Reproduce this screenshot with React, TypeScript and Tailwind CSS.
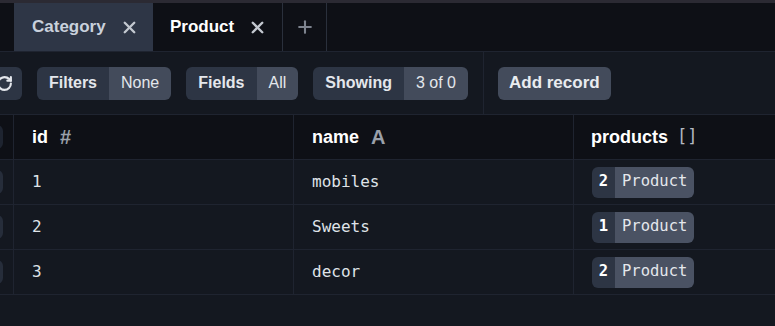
import React from 'react';
import { X, Plus, RotateCw } from 'lucide-react';

interface Row {
  id: number;
  name: string;
  count: number;
}

const rows: Row[] = [
  { id: 1, name: 'mobiles', count: 2 },
  { id: 2, name: 'Sweets', count: 1 },
  { id: 3, name: 'decor', count: 2 },
];

const sans = { fontFamily: '"Liberation Sans", Arial, sans-serif' };
const mono = { fontFamily: '"DejaVu Sans Mono", monospace' };

const ToolGroup: React.FC<{ label: string; value: string }> = ({ label, value }) => (
  <div className="flex h-[33px] overflow-hidden rounded-md text-[16px] text-[#e4e7ec]">
    <span className="flex items-center bg-[#2d3544] px-3 font-bold">{label}</span>
    <span className="flex items-center bg-[#434b5b] px-3">{value}</span>
  </div>
);

const Gutter: React.FC<{ header?: boolean }> = ({ header }) => (
  <div className="flex w-[14px] shrink-0 items-center border-r border-[#1f2430]">
    <div className={`-ml-[21px] h-6 w-6 rounded-md ${header ? 'bg-[#1e2430]' : 'bg-[#262d3a]'}`} />
  </div>
);

export default function App() {
  return (
    <div className="h-[326px] w-[775px] overflow-hidden bg-[#141820]" style={sans}>
      <div className="h-[3px] bg-[#2b2a33]" />

      <div className="flex h-[49px] border-b border-[#1f2430] bg-[#0e1016]">
        <div className="w-[14px]" />
        <div className="flex w-[139px] items-center gap-[14px] bg-[#2e3646] pl-[18px] text-[17px] font-bold text-[#c9d1dc]">
          Category
          <X className="h-[19px] w-[19px] text-[#c3c8d0]" strokeWidth={3} />
        </div>
        <div className="flex w-[129px] items-center gap-[14px] pl-[17px] text-[17px] font-bold text-white">
          Product
          <X className="h-[19px] w-[19px] text-[#c3c8d0]" strokeWidth={3} />
        </div>
        <div className="flex w-[45px] items-center justify-center border-x border-[#2a303c]">
          <Plus className="h-5 w-5 text-[#7d838e]" strokeWidth={2.5} />
        </div>
      </div>

      <div className="flex h-[63px] items-center border-b border-[#1f2430]">
        <div className="flex items-center gap-[15px]">
          <button className="-ml-[14px] flex h-[33px] w-[36px] items-center justify-center rounded-md bg-[#2d3544] text-[#e4e7ec]">
            <RotateCw className="h-[17px] w-[17px]" strokeWidth={3} />
          </button>
          <ToolGroup label="Filters" value="None" />
          <ToolGroup label="Fields" value="All" />
          <ToolGroup label="Showing" value="3 of 0" />
        </div>
        <div className="ml-[15px] flex h-full items-center border-l border-[#1f2430] pl-[14px]">
          <button className="h-[33px] rounded-md bg-[#434b5b] px-[11px] text-[17px] font-bold text-[#e9ecf0]">
            Add record
          </button>
        </div>
      </div>

      <div className="flex h-[45px] border-b border-[#1f2430] bg-[#0e1016] text-[18px] font-bold text-white">
        <Gutter header />
        <div className="flex w-[280px] items-center gap-3 border-r border-[#1f2430] pl-[18px]">
          id <span className="text-[20px] text-[#9aa0aa]">#</span>
        </div>
        <div className="flex w-[280px] items-center gap-3 border-r border-[#1f2430] pl-[18px]">
          name <span className="text-[20px] text-[#9aa0aa]">A</span>
        </div>
        <div className="flex flex-1 items-center gap-[9px] pl-[17px]">
          products
          <span className="text-[17px] font-normal text-[#b5bac2]" style={mono}>
            []
          </span>
        </div>
      </div>

      {rows.map((r) => (
        <div key={r.id} className="flex h-[45px] border-b border-[#1f2430] text-[16px] text-[#dfe3e8]" style={mono}>
          <Gutter />
          <div className="flex w-[280px] items-center border-r border-[#1f2430] pl-[18px]">{r.id}</div>
          <div className="flex w-[280px] items-center border-r border-[#1f2430] pl-[18px]">{r.name}</div>
          <div className="flex flex-1 items-center pl-[18px]">
            <div className="flex h-[31px] overflow-hidden rounded-md text-[15.5px]">
              <span className="flex w-[23px] items-center justify-center bg-[#2d3544] font-bold text-white">{r.count}</span>
              <span className="flex items-center bg-[#4a5263] pl-[7px] pr-[7px] text-[#e4e7ec]">Product</span>
            </div>
          </div>
        </div>
      ))}
    </div>
  );
}
